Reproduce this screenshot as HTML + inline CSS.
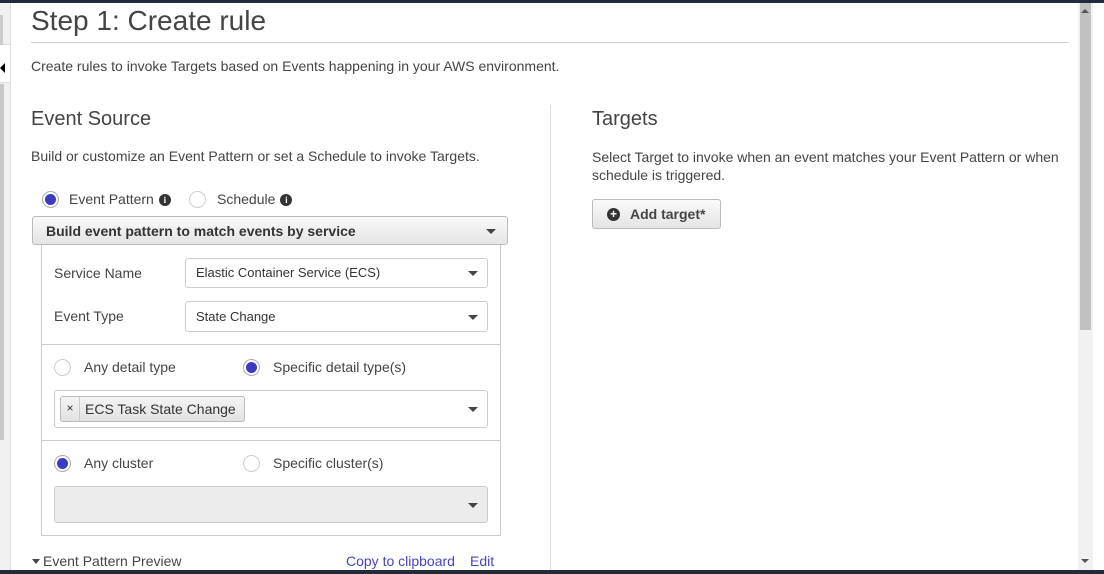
<!DOCTYPE html>
<html><head><meta charset="utf-8"><style>
*{box-sizing:border-box;margin:0;padding:0}
body{width:1104px;height:574px;overflow:hidden;background:#fff;font-family:"Liberation Sans",sans-serif;color:#444;position:relative;font-size:14px}
.a{position:absolute;white-space:nowrap}
.radio{position:absolute;width:17px;height:17px;border-radius:50%;border:1px solid #ccc;background:#fff}
.radio.on{border-color:#aab;background:#fff}
.radio.on::after{content:"";position:absolute;left:2px;top:2px;width:11px;height:11px;border-radius:50%;background:#3b3bc4}
.sel{position:absolute;border:1px solid #ccc;border-radius:3px;background:#fff;font-size:13px;color:#333;padding-left:10px}
.car{position:absolute;right:10px;top:50%;margin-top:-2px;border-left:5px solid transparent;border-right:5px solid transparent;border-top:5px solid #444}
.info{display:inline-block;width:12px;height:12px;border-radius:50%;background:#333;color:#fff;font-size:9px;font-weight:bold;text-align:center;line-height:12px;font-family:"Liberation Serif",serif;vertical-align:1px;margin-left:5px}
</style></head><body>
<div class="a" style="left:0;top:0;width:1104px;height:3px;background:#232a3a"></div>
<div class="a" style="left:0;top:570px;width:1104px;height:4px;background:#232a3a"></div>
<div class="a" style="left:10px;top:3px;width:1px;height:567px;background:#ddd"></div>
<div class="a" style="left:0;top:3px;width:10px;height:42px;background:#f1f1f1;border-bottom:1px solid #ddd"></div>
<div class="a" style="left:0;top:15px;width:3px;height:30px;background:#ccc"></div>
<div class="a" style="left:0;top:63px;border-top:5px solid transparent;border-bottom:5px solid transparent;border-right:5px solid #000"></div>
<div class="a" style="left:0;top:82px;width:10px;height:488px;background:#f1f1f1;border-top:1px solid #ddd"></div>
<div class="a" style="left:0;top:84px;width:4px;height:356px;background:#c8c8c8"></div>

<div class="a" style="left:31px;top:3px;font-size:28px;color:#444;line-height:36px">Step 1: Create rule</div>
<div class="a" style="left:31px;top:42px;width:1038px;height:1px;background:#ccc"></div>
<div class="a" style="left:31px;top:58px;font-size:14px">Create rules to invoke Targets based on Events happening in your AWS environment.</div>

<div class="a" style="left:31px;top:107px;font-size:20px;line-height:24px">Event Source</div>
<div class="a" style="left:31px;top:148px">Build or customize an Event Pattern or set a Schedule to invoke Targets.</div>
<div class="a" style="left:550px;top:105px;width:1px;height:465px;background:#ddd"></div>

<div class="radio on" style="left:42px;top:191px"></div>
<div class="a" style="left:69px;top:191px">Event Pattern<span class="info">i</span></div>
<div class="radio" style="left:189px;top:191px"></div>
<div class="a" style="left:217px;top:191px">Schedule<span class="info">i</span></div>

<div class="a" style="left:32px;top:216px;width:476px;height:29px;border:1px solid #bbb;border-radius:3px;background:linear-gradient(#fafafa,#e4e4e4);font-weight:bold;color:#333;padding:6px 0 0 13px">Build event pattern to match events by service<div class="car" style="right:11px"></div></div>

<div class="a" style="left:41px;top:245px;width:460px;height:291px;border:1px solid #ccc;border-top:none"></div>
<div class="a" style="left:54px;top:265px">Service Name</div>
<div class="sel" style="left:185px;top:258px;width:303px;height:30px;line-height:28px">Elastic Container Service (ECS)<div class="car" style="right:9px"></div></div>
<div class="a" style="left:54px;top:308px">Event Type</div>
<div class="sel" style="left:185px;top:301px;width:303px;height:31px;line-height:29px">State Change<div class="car" style="right:9px"></div></div>
<div class="a" style="left:42px;top:344px;width:458px;height:1px;background:#ccc"></div>

<div class="radio" style="left:54px;top:359px"></div>
<div class="a" style="left:84px;top:359px">Any detail type</div>
<div class="radio on" style="left:243px;top:359px"></div>
<div class="a" style="left:273px;top:359px">Specific detail type(s)</div>
<div class="sel" style="left:54px;top:390px;width:434px;height:38px;padding:0"><div class="car" style="right:9px"></div>
<div class="a" style="left:5px;top:5px;width:185px;height:26px;border:1px solid #bbb;border-radius:3px;background:linear-gradient(#f4f4f4,#e2e2e2);font-size:14px;color:#333">
<span class="a" style="left:0;top:0;width:19px;height:24px;border-right:1px solid #ccc;text-align:center;line-height:23px;font-size:12px">×</span>
<span class="a" style="left:24px;top:4px">ECS Task State Change</span></div></div>
<div class="a" style="left:42px;top:440px;width:458px;height:1px;background:#ccc"></div>

<div class="radio on" style="left:54px;top:455px"></div>
<div class="a" style="left:84px;top:455px">Any cluster</div>
<div class="radio" style="left:243px;top:455px"></div>
<div class="a" style="left:273px;top:455px">Specific cluster(s)</div>
<div class="sel" style="left:54px;top:486px;width:434px;height:37px;background:#ececec"><div class="car" style="right:9px"></div></div>

<div class="a" style="left:32px;top:553px"><span style="display:inline-block;border-left:4px solid transparent;border-right:4px solid transparent;border-top:5px solid #444;vertical-align:2px;margin-right:3px"></span>Event Pattern Preview</div>
<div class="a" style="left:346px;top:553px;color:#4545c8">Copy to clipboard</div>
<div class="a" style="left:470px;top:553px;color:#4545c8">Edit</div>

<div class="a" style="left:592px;top:107px;font-size:20px;line-height:24px">Targets</div>
<div class="a" style="left:592px;top:148px;line-height:18px;white-space:normal;width:475px">Select Target to invoke when an event matches your Event Pattern or when schedule is triggered.</div>
<div class="a" style="left:592px;top:199px;width:129px;height:30px;border:1px solid #bbb;border-radius:3px;background:linear-gradient(#fafafa,#e4e4e4);font-weight:bold;color:#444;padding:6px 0 0 14px"><span style="display:inline-block;width:13px;height:13px;border-radius:50%;background:#333;color:#fff;font-size:12px;line-height:12px;text-align:center;vertical-align:1px;margin-right:10px">+</span>Add target*</div>

<div class="a" style="left:1078px;top:3px;width:15px;height:567px;background:#f1f1f1"></div>
<div class="a" style="left:1080px;top:3px;width:11px;height:327px;background:#c1c1c1"></div>
<div class="a" style="left:1081px;top:9px;border-left:4px solid transparent;border-right:4px solid transparent;border-bottom:4px solid #555"></div>
<div class="a" style="left:1081px;top:559px;border-left:4px solid transparent;border-right:4px solid transparent;border-top:4px solid #555"></div>
</body></html>
